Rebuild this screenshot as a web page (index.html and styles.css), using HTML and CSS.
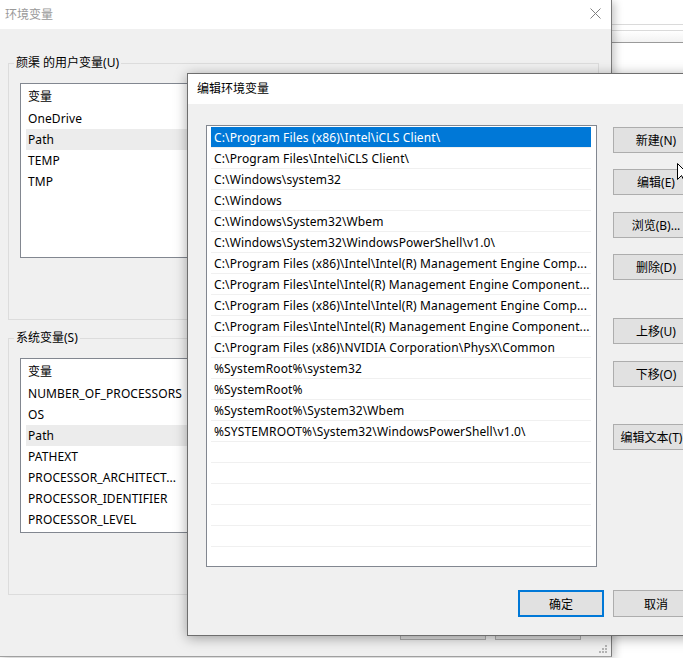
FILE: index.html
```html
<!DOCTYPE html>
<html lang="zh-CN">
<head>
  <meta charset="UTF-8" />
  <title>编辑环境变量</title>
  <link rel="stylesheet" href="styles.css">
</head>
<body>
  <div class="desktop">

    <div class="other-window">
      <div class="other-bar"></div>
      <div class="other-bar thin"></div>
      <div class="other-bar tool"></div>
    </div>

    <div class="env-window">
      <div class="env-title">
        <span>环境变量</span>
        <svg class="close-icon" width="11" height="11" viewBox="0 0 11 11">
          <path d="M0.5 0.5L10.5 10.5M10.5 0.5L0.5 10.5" stroke="#808080" stroke-width="1" fill="none"/>
        </svg>
      </div>

      <div class="env-body">
        <fieldset class="group">
          <legend>颜渠 的用户变量(U)</legend>
          <div class="var-list">
            <div class="var-head">变量</div>
            <div class="var-row">OneDrive</div>
            <div class="var-row selected">Path</div>
            <div class="var-row">TEMP</div>
            <div class="var-row">TMP</div>
          </div>
        </fieldset>

        <fieldset class="group second">
          <legend>系统变量(S)</legend>
          <div class="var-list">
            <div class="var-head">变量</div>
            <div class="var-row">NUMBER_OF_PROCESSORS</div>
            <div class="var-row">OS</div>
            <div class="var-row selected">Path</div>
            <div class="var-row">PATHEXT</div>
            <div class="var-row">PROCESSOR_ARCHITECT...</div>
            <div class="var-row">PROCESSOR_IDENTIFIER</div>
            <div class="var-row">PROCESSOR_LEVEL</div>
          </div>
        </fieldset>

        <div class="env-buttons">
          <button class="btn">确定</button>
          <button class="btn">取消</button>
        </div>
      </div>

      <svg class="grip" width="10" height="10" viewBox="0 0 10 10">
        <rect x="7" y="1" width="2" height="2" fill="#b4b4b4"/>
        <rect x="4" y="4" width="2" height="2" fill="#b4b4b4"/>
        <rect x="7" y="4" width="2" height="2" fill="#b4b4b4"/>
        <rect x="1" y="7" width="2" height="2" fill="#b4b4b4"/>
        <rect x="4" y="7" width="2" height="2" fill="#b4b4b4"/>
        <rect x="7" y="7" width="2" height="2" fill="#b4b4b4"/>
      </svg>
    </div>

    <div class="edit-dialog">
      <div class="dialog-title">编辑环境变量</div>
      <div class="dialog-body">
        <div class="dialog-main">
          <div class="path-list">
            <div class="path-row selected">C:\Program Files (x86)\Intel\iCLS Client\</div>
            <div class="path-row">C:\Program Files\Intel\iCLS Client\</div>
            <div class="path-row">C:\Windows\system32</div>
            <div class="path-row">C:\Windows</div>
            <div class="path-row">C:\Windows\System32\Wbem</div>
            <div class="path-row">C:\Windows\System32\WindowsPowerShell\v1.0\</div>
            <div class="path-row">C:\Program Files (x86)\Intel\Intel(R) Management Engine Comp...</div>
            <div class="path-row">C:\Program Files\Intel\Intel(R) Management Engine Component...</div>
            <div class="path-row">C:\Program Files (x86)\Intel\Intel(R) Management Engine Comp...</div>
            <div class="path-row">C:\Program Files\Intel\Intel(R) Management Engine Component...</div>
            <div class="path-row">C:\Program Files (x86)\NVIDIA Corporation\PhysX\Common</div>
            <div class="path-row">%SystemRoot%\system32</div>
            <div class="path-row">%SystemRoot%</div>
            <div class="path-row">%SystemRoot%\System32\Wbem</div>
            <div class="path-row">%SYSTEMROOT%\System32\WindowsPowerShell\v1.0\</div>
            <div class="path-row"></div>
            <div class="path-row"></div>
            <div class="path-row"></div>
            <div class="path-row"></div>
            <div class="path-row"></div>
            <div class="path-row"></div>
            <div class="path-row"></div>
          </div>

          <div class="side-buttons">
            <button class="btn side">新建(N)</button>
            <button class="btn side">编辑(E)</button>
            <button class="btn side nudge">浏览(B)...</button>
            <button class="btn side">删除(D)</button>
            <button class="btn side move-up">上移(U)</button>
            <button class="btn side nudge">下移(O)</button>
            <button class="btn side edit-text">编辑文本(T)</button>
          </div>
        </div>

        <div class="dialog-footer">
          <button class="btn side default">确定</button>
          <button class="btn side">取消</button>
        </div>
      </div>
    </div>

    <svg class="cursor" width="12" height="20" viewBox="0 0 12 20">
      <path d="M0.5 0.5L0.5 16.5L4.5 12.5L7.5 18.5L9.5 17.5L6.5 11.5L11.5 11.5Z" fill="#fff" stroke="#000" stroke-width="1"/>
    </svg>

  </div>
</body>
</html>
```

FILE: styles.css
```css
* {
  box-sizing: border-box;
}

body {
  margin: 0;
  font-family: "Noto Sans", "Noto Sans CJK SC", sans-serif;
  font-size: 12px;
  color: #000;
  background: #fff;
}

.desktop {
  position: relative;
  width: 683px;
  height: 658px;
  overflow: hidden;
  background: #fff;
}

/* window sitting behind, only its right part shows */
.other-window {
  position: absolute;
  left: 600px;
  top: 0;
  width: 120px;
  height: 658px;
  background: #fff;
}

.other-bar {
  height: 25px;
  border-bottom: 1px solid #dadada;
}

.other-bar.thin {
  height: 6px;
}

.other-bar.tool {
  height: 12px;
  background: linear-gradient(#fff, #f2f2f2);
  border-bottom: 1px solid #9a9a9a;
}

/* 环境变量 */
.env-window {
  position: absolute;
  left: 0;
  top: 0;
  width: 612px;
  height: 657px;
  background: #f0f0f0;
  border-right: 1px solid #7a7a7a;
  border-bottom: 1px solid #a0a0a0;
  box-shadow: 3px 2px 8px rgba(0, 0, 0, 0.22);
}

.env-title {
  height: 29px;
  background: #fff;
  color: #999;
  display: flex;
  justify-content: space-between;
  align-items: center;
  padding: 0 10px 2px 5px;
  font-family: "Noto Sans CJK SC", sans-serif;
}

.env-body {
  padding: 26px 0 0 8px;
}

.group {
  width: 591px;
  margin: 0;
  padding: 12px 11px 61px;
  border: 1px solid #dcdcdc;
  min-width: 0;
}

.group.second {
  margin-top: 10px;
}

.group legend {
  margin-left: -6px;
  padding: 0 2px;
  line-height: 16px;
}

.var-list {
  height: 175px;
  background: #fff;
  border: 1px solid #828790;
  padding: 1px 5px 0;
  overflow: hidden;
  letter-spacing: 0.1px;
}

.var-head {
  height: 23px;
  line-height: 23px;
  padding-left: 2px;
}

.var-row {
  height: 21px;
  line-height: 21px;
  padding-left: 2px;
  white-space: nowrap;
}

.var-row.selected {
  background: #ececec;
}

.env-buttons {
  display: flex;
  justify-content: flex-end;
  gap: 9px;
  margin-top: 19px;
  padding-right: 30px;
}

.btn {
  width: 86px;
  height: 26px;
  padding: 0;
  background: #e1e1e1;
  border: 1px solid #adadad;
  font-family: "Noto Sans", "Noto Sans CJK SC", sans-serif;
  font-size: 12px;
  color: #000;
}

.grip {
  position: absolute;
  right: 3px;
  bottom: 2px;
}

/* 编辑环境变量 */
.edit-dialog {
  position: absolute;
  left: 187px;
  top: 73px;
  width: 525px;
  height: 563px;
  background: #f0f0f0;
  border: 1px solid #6e6e6e;
  box-shadow: 0 2px 12px rgba(0, 0, 0, 0.35);
}

.dialog-title {
  height: 30px;
  line-height: 28px;
  padding-left: 9px;
  background: #fff;
  font-family: "Noto Sans CJK SC", sans-serif;
}

.dialog-body {
  padding: 21px 0 0 18px;
}

.dialog-main {
  display: flex;
  align-items: flex-start;
  gap: 16px;
}

.path-list {
  width: 391px;
  height: 442px;
  background: #fff;
  border: 1px solid #828790;
  padding: 1px 5px 0 4px;
  overflow: hidden;
  flex-shrink: 0;
  letter-spacing: 0.13px;
}

.path-row {
  height: 21px;
  line-height: 22px;
  padding-left: 3px;
  border-bottom: 1px solid #f0f0f0;
  white-space: nowrap;
  overflow: hidden;
}

.path-row.selected {
  background: #0078d7;
  color: #fff;
}

.side-buttons {
  display: flex;
  flex-direction: column;
  gap: 16px;
  padding-top: 2px;
}

.btn.nudge {
  margin-top: 1px;
}

.btn.move-up {
  margin-top: 22px;
}

.btn.edit-text {
  margin-top: 21px;
  padding-right: 9px;
}

.dialog-footer {
  display: flex;
  gap: 9px;
  margin-top: 23px;
  padding-left: 312px;
}

.dialog-footer .btn {
  height: 27px;
}

.btn.default {
  border: 2px solid #0078d7;
}

.cursor {
  position: absolute;
  left: 677px;
  top: 163px;
}
```
